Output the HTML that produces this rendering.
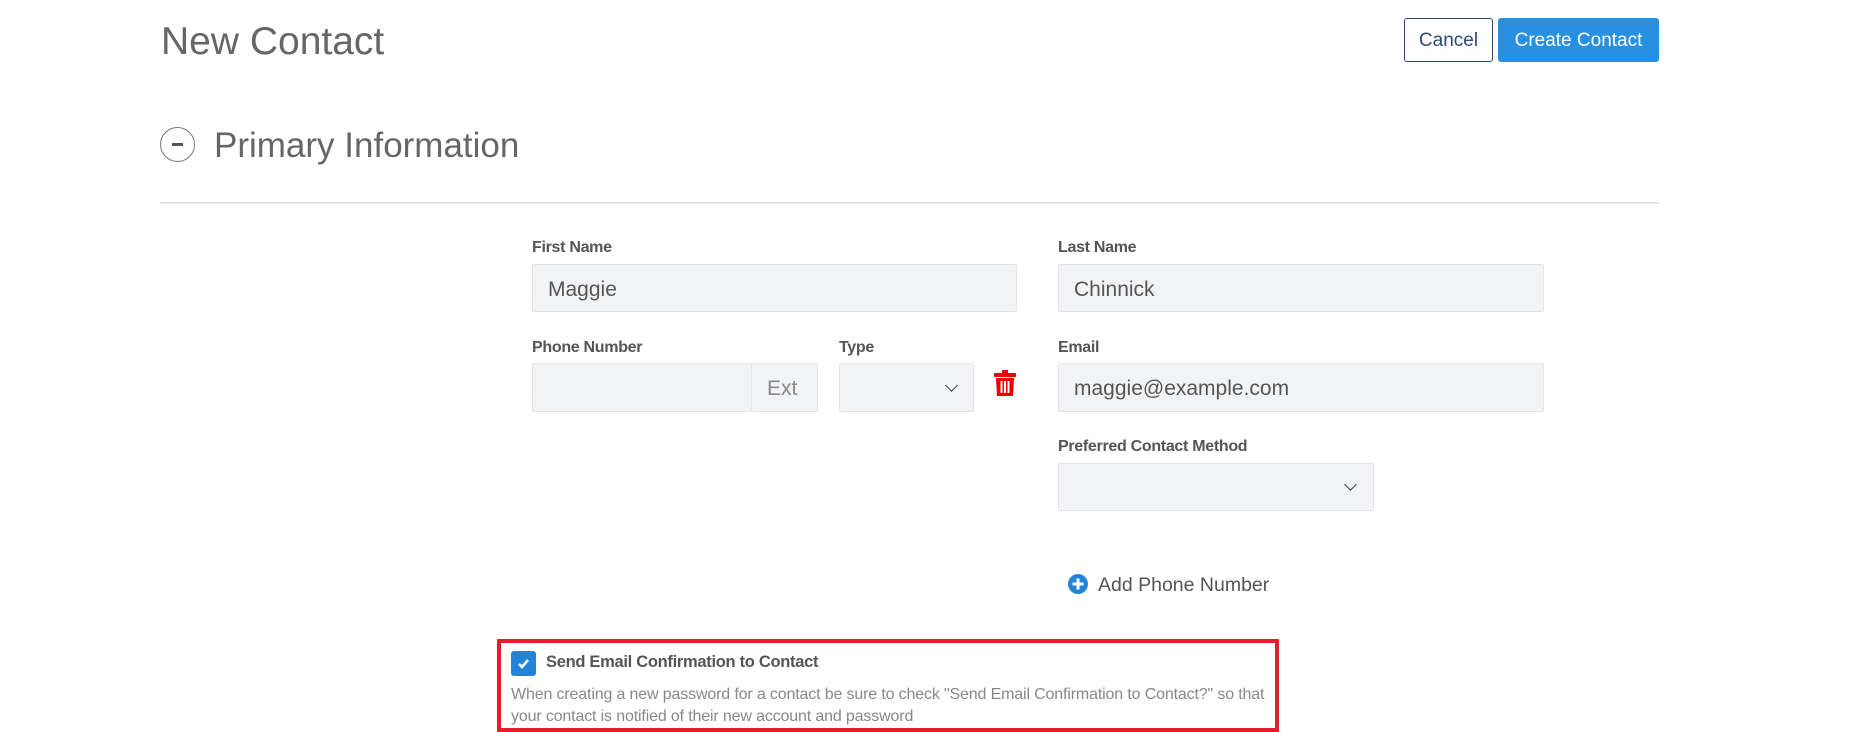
<!DOCTYPE html>
<html><head><meta charset="utf-8"><style>
*{box-sizing:border-box;margin:0;padding:0}
body{width:1856px;height:732px;background:#fff;font-family:"Liberation Sans",sans-serif;position:relative;overflow:hidden;color:#555}
.a{position:absolute;white-space:nowrap}
.lbl{font-size:16px;color:#555;font-weight:bold;letter-spacing:-0.3px}
.inp{position:absolute;background:#f2f3f5;border:1px solid #e3e5e8;border-radius:2px;font-size:21px;color:#555;padding-left:15px;line-height:50px}
.chev{position:absolute;width:9px;height:9px;border-right:1.6px solid #444;border-bottom:1.6px solid #444;transform:rotate(45deg)}
</style></head><body>
<div class="a" style="left:161px;top:20px;font-size:39px;color:#666">New Contact</div>
<div class="a" style="left:1404px;top:18px;width:89px;height:44px;border:1px solid #2a4a74;border-radius:3px;color:#2a4a74;font-size:19px;line-height:44px;text-align:center">Cancel</div>
<div class="a" style="left:1498px;top:18px;width:161px;height:44px;background:#2790e0;border-radius:3px;color:#fff;font-size:19px;line-height:46px;text-align:center">Create Contact</div>
<div class="a" style="left:160px;top:127px;width:35px;height:35px;border:1.5px solid #777;border-radius:50%"></div>
<div class="a" style="left:172px;top:143px;width:11px;height:3px;background:#555"></div>
<div class="a" style="left:214px;top:126px;font-size:35px;color:#666">Primary Information</div>
<div class="a" style="left:160px;top:202px;width:1499px;height:2px;background:#e5e5e5"></div>

<div class="a lbl" style="left:532px;top:239px">First Name</div>
<div class="inp" style="left:532px;top:264px;width:485px;height:48px">Maggie</div>
<div class="a lbl" style="left:1058px;top:239px">Last Name</div>
<div class="inp" style="left:1058px;top:264px;width:486px;height:48px">Chinnick</div>

<div class="a lbl" style="left:532px;top:339px">Phone Number</div>
<div class="inp" style="left:532px;top:363px;width:220px;height:49px"></div>
<div class="inp" style="left:751px;top:363px;width:67px;height:49px;color:#888;padding-left:15px">Ext</div>
<div class="a lbl" style="left:839px;top:339px">Type</div>
<div class="inp" style="left:839px;top:363px;width:135px;height:49px"></div>
<div class="chev" style="left:947px;top:381px"></div>
<svg class="a" style="left:994px;top:370px" width="22" height="26" viewBox="0 0 22 26"><rect x="8" y="0" width="6" height="3" fill="#e00"/><rect x="0" y="3" width="22" height="4" rx="1" fill="#e00"/><path d="M2 8h18l-1 18H3z" fill="#e00"/><rect x="6.5" y="11" width="2" height="12" fill="#fff"/><rect x="10" y="11" width="2" height="12" fill="#fff"/><rect x="13.5" y="11" width="2" height="12" fill="#fff"/></svg>
<div class="a lbl" style="left:1058px;top:339px">Email</div>
<div class="inp" style="left:1058px;top:363px;width:486px;height:49px">maggie@example.com</div>
<div class="a lbl" style="left:1058px;top:438px">Preferred Contact Method</div>
<div class="inp" style="left:1058px;top:463px;width:316px;height:48px"></div>
<div class="chev" style="left:1346px;top:480px"></div>

<svg class="a" style="left:1068px;top:574px" width="20" height="20" viewBox="0 0 20 20"><circle cx="10" cy="10" r="10" fill="#2184d8"/><rect x="8.5" y="4.5" width="3" height="11" fill="#fff"/><rect x="4.5" y="8.5" width="11" height="3" fill="#fff"/></svg>
<div class="a" style="left:1098px;top:574px;font-size:19.5px;color:#555">Add Phone Number</div>

<div class="a" style="left:497px;top:639px;width:782px;height:93px;border:4px solid #e41e2b"></div>
<div class="a" style="left:511px;top:651px;width:25px;height:25px;background:#2184d8;border-radius:3px"></div>
<svg class="a" style="left:516px;top:656px" width="15" height="15" viewBox="0 0 15 15"><path d="M3 8l3 3 6-7" stroke="#fff" stroke-width="2.5" fill="none"/></svg>
<div class="a" style="left:546px;top:653px;font-size:16.5px;font-weight:bold;color:#555;letter-spacing:-0.3px">Send Email Confirmation to Contact</div>
<div class="a" style="left:511px;top:686px;font-size:16px;color:#888;letter-spacing:-0.15px">When creating a new password for a contact be sure to check "Send Email Confirmation to Contact?" so that</div>
<div class="a" style="left:511px;top:708px;font-size:16px;color:#888;letter-spacing:-0.15px">your contact is notified of their new account and password</div>
</body></html>
